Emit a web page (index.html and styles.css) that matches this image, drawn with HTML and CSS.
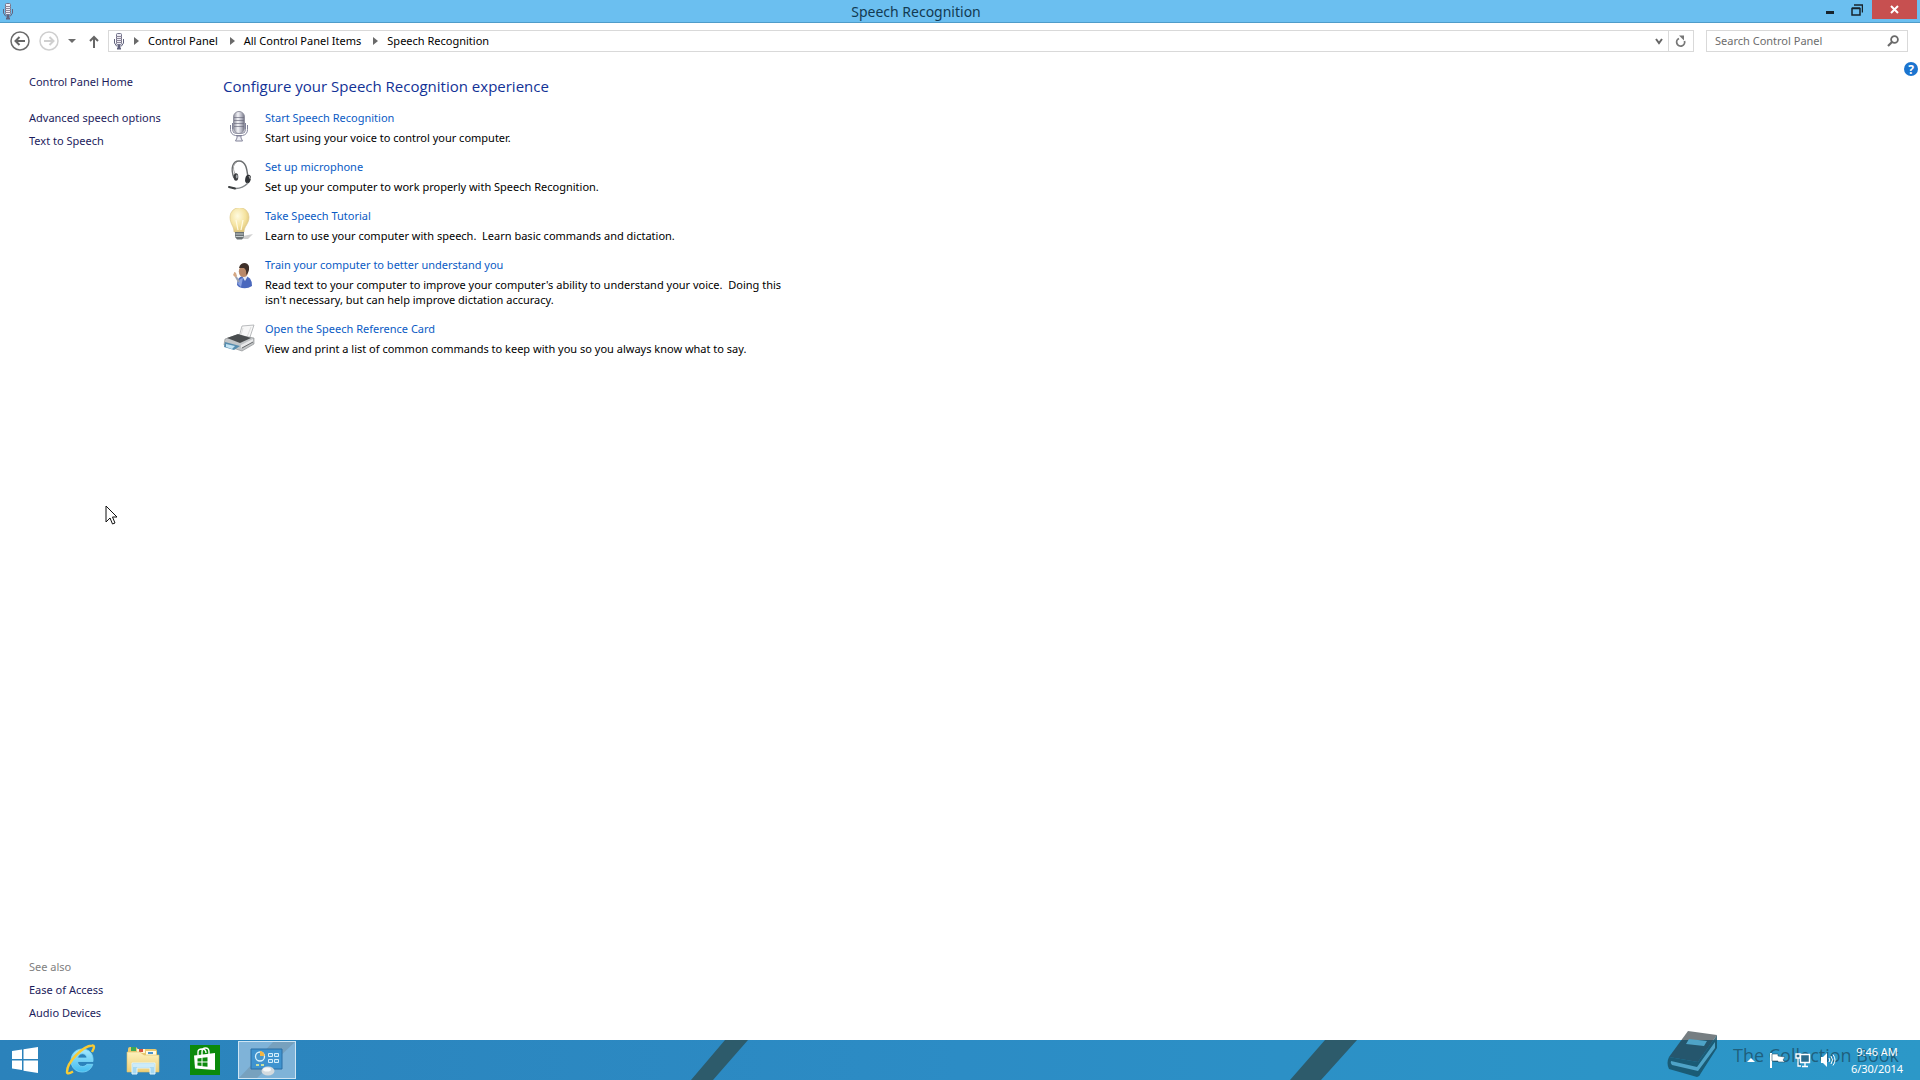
FILE: index.html
```html
<!DOCTYPE html>
<html lang="en">
<head>
<meta charset="utf-8">
<title>Speech Recognition</title>
<link rel="stylesheet" href="styles.css">
</head>
<body>
<svg class="defs" aria-hidden="true">
  <defs>
    <linearGradient id="metal" x1="0" x2="1"><stop offset="0" stop-color="#8b8c9a"/><stop offset=".4" stop-color="#f4f4f8"/><stop offset=".7" stop-color="#b9bac6"/><stop offset="1" stop-color="#6f7080"/></linearGradient>
    <radialGradient id="glass" cx=".4" cy=".35" r=".7"><stop offset="0" stop-color="#fffbe0"/><stop offset=".6" stop-color="#f5e3a0"/><stop offset="1" stop-color="#dcc074"/></radialGradient>
    <linearGradient id="sky" x1="0" y1="0" x2="0" y2="1"><stop offset="0" stop-color="#a5e8fd"/><stop offset="1" stop-color="#43bdf0"/></linearGradient>
    <linearGradient id="manila" x1="0" y1="0" x2="0" y2="1"><stop offset="0" stop-color="#fdf1bd"/><stop offset="1" stop-color="#edcf77"/></linearGradient>
    <symbol id="mic" viewBox="0 0 32 32">
      <path d="M7.500 15v4.500q0 5 5 6h7q5-1 5-6V15M9.500 13v6.500q0 4 4 4h5q4 0 4-4V13" fill="none" stroke="#83849a"/>
      <path d="M14 26h4v2l1.500 3h-7L14 28z" fill="#eeeef4" stroke="#83849a"/>
      <rect x="10.500" y="1.500" width="11" height="22" rx="5.500" fill="url(#metal)" stroke="#9192a0"/>
      <path d="M11 10.500h10M11 13.500h10M11 16.500h10M11 7.500h10" stroke="#6d6e80" stroke-opacity=".7"/>
    </symbol>
    <symbol id="mic-small" viewBox="0 0 16 18">
      <path d="M3.500 7v4l2 3h5l2-3V7" fill="none" stroke="#62637e"/>
      <rect x="5.500" y="1.500" width="5" height="11" rx="1" fill="#eeedf5" stroke="#73748c"/>
      <path d="M5 4.500h6M5 6.500h6M5 8.500h6M5 10.500h6" stroke="#8d8799"/>
      <path d="M8 13v3M6 16.500h4" stroke="#62637e" stroke-width="2"/>
    </symbol>
    <symbol id="chevron" viewBox="0 0 5 8"><path d="M0 0l5 4-5 4z" fill="#6a6a6a"/></symbol>
  </defs>
</svg>

<header class="titlebar">
  <svg class="title-icon" width="16" height="18"><use href="#mic-small"/></svg>
  <h1 class="title">Speech Recognition</h1>
  <div class="window-buttons">
    <button class="win-btn" aria-label="Minimize"><svg width="8" height="12"><path d="M0 7h8v3H0z" fill="#17242d"/></svg></button>
    <button class="win-btn" aria-label="Restore"><svg width="12" height="12"><path d="M1 4.500h8v6.500H1zM1 4h8" fill="none" stroke="#17242d" stroke-width="1.500"/><path d="M3 1h8.500v7.500" fill="none" stroke="#17242d" stroke-width="1.500"/></svg></button>
    <button class="win-btn close" aria-label="Close"><svg width="9" height="9"><path d="M1 1l7 7M8 1L1 8" stroke="#fff" stroke-width="2"/></svg></button>
  </div>
</header>

<nav class="navbar" aria-label="Navigation">
  <button class="nav-btn" aria-label="Back"><svg width="20" height="20"><circle cx="10" cy="10" r="9" fill="none" stroke="#6c6c6c" stroke-width="1.500"/><path d="M15 10H6M9.500 6L5.500 10l4 4" fill="none" stroke="#666" stroke-width="2"/></svg></button>
  <button class="nav-btn" aria-label="Forward"><svg width="20" height="20"><circle cx="10" cy="10" r="9" fill="none" stroke="#cfcfcf" stroke-width="1.500"/><path d="M5 10h9M10.500 6l4 4-4 4" fill="none" stroke="#cfcfcf" stroke-width="2"/></svg></button>
  <button class="nav-btn recent" aria-label="Recent locations"><svg width="8" height="4"><path d="M0 0h8L4 4z" fill="#6c6c6c"/></svg></button>
  <button class="nav-btn" aria-label="Up"><svg width="10" height="13"><path d="M5 13V2M1 6l4-4 4 4" fill="none" stroke="#666" stroke-width="2"/></svg></button>
  <div class="address">
    <svg width="16" height="18"><use href="#mic-small"/></svg>
    <ol class="crumbs">
      <li><svg width="5" height="8"><use href="#chevron"/></svg><a href="#">Control Panel</a></li>
      <li><svg width="5" height="8"><use href="#chevron"/></svg><a href="#">All Control Panel Items</a></li>
      <li><svg width="5" height="8"><use href="#chevron"/></svg><a href="#">Speech Recognition</a></li>
    </ol>
    <button class="address-btn" aria-label="Previous locations"><svg width="8" height="7"><path d="M1 1l3 4 3-4" fill="none" stroke="#666" stroke-width="2"/></svg></button>
    <button class="address-btn refresh" aria-label="Refresh"><svg width="12" height="13"><path d="M4 3.500A4 4 0 1 0 9.500 6" fill="none" stroke="#777" stroke-width="1.800"/><path d="M4 0.500h5v5z" fill="#777"/></svg></button>
  </div>
  <form class="search">
    <input class="search-input" type="text" aria-label="Search Control Panel" placeholder="Search Control Panel">
    <button class="search-btn" type="button" aria-label="Search"><svg width="12" height="12"><circle cx="7.500" cy="4.500" r="3.400" fill="none" stroke="#6a6a6a" stroke-width="1.800"/><path d="M5 7L1 11" stroke="#6a6a6a" stroke-width="2.200"/></svg></button>
  </form>
</nav>

<div class="content">
  <aside class="sidebar">
    <a class="home" href="#">Control Panel Home</a>
    <a href="#">Advanced speech options</a>
    <a href="#">Text to Speech</a>
    <div class="see-also">
      <span>See also</span>
      <a href="#">Ease of Access</a>
      <a href="#">Audio Devices</a>
    </div>
  </aside>
  <main class="main">
    <h2 class="heading">Configure your Speech Recognition experience</h2>
    <ul class="tasks">
      <li class="task">
        <svg width="32" height="32"><use href="#mic"/></svg>
        <div><a href="#">Start Speech Recognition</a><p>Start using your voice to control your computer.</p></div>
      </li>
      <li class="task">
        <svg width="32" height="32" viewBox="0 0 32 32"><path d="M11 19C7 9 10 2 16 2c7 0 8 8 9 17" fill="none" stroke="#6b6e70" stroke-width="1.400"/><path d="M12 15Q8 6 14 3" fill="none" stroke="#aaa"/><ellipse cx="13" cy="18" rx="2.300" ry="3.700" fill="#3b3d40"/><ellipse cx="13.800" cy="17.500" rx="1" ry="2" fill="#a4a8aa"/><ellipse cx="25" cy="20" rx="2.800" ry="4.300" transform="rotate(12 25 20)" fill="#303336"/><path d="M26 17l1.500 3" stroke="#aaa" stroke-width="1.300"/><path d="M25 24Q18 31 9 29" fill="none" stroke="#85898c" stroke-width="1.500"/><path d="M6 28l6 1.500" stroke="#3c3f41" stroke-width="2" stroke-linecap="round"/></svg>
        <div><a href="#">Set up microphone</a><p>Set up your computer to work properly with Speech Recognition.</p></div>
      </li>
      <li class="task">
        <svg width="32" height="32" viewBox="0 0 32 32"><path d="M20 28l10-2-5 5H18z" fill="#aaa" opacity=".55"/><path d="M12 24C12 18 8 16 8 9a9.500 9.500 0 0 1 19 0c0 7-5 9-5 15z" transform="translate(-1 0)" fill="url(#glass)" stroke="#dcc98e" stroke-width=".7"/><path d="M13 12l2 10M20 12l-2 10" stroke="#fffbe5" stroke-width="1.200"/><path d="M12 24h9v5l-2 2.500h-5L12 29z" fill="#6b7275"/><path d="M12.500 26h8M12.500 28.500h8" stroke="#c5cccd"/></svg>
        <div><a href="#">Take Speech Tutorial</a><p>Learn to use your computer with speech.&nbsp; Learn basic commands and dictation.</p></div>
      </li>
      <li class="task">
        <svg width="32" height="32" viewBox="0 -2 32 32"><path d="M14 26q0-9 7-9 8 0 8 10-6 4-13 1z" fill="#4a68bd"/><path d="M15 25q1-6 5-6l-2 9z" fill="#879fe0"/><path d="M19 17l3 5 3-5z" fill="#e5e8f3"/><ellipse cx="20.500" cy="12.500" rx="4.700" ry="5.500" fill="#b98868"/><path d="M16 9q1-5 6-5 5 1 4 7-1 4-3 5 1-5-2-7z" fill="#3e2f29"/><path d="M11 14q0-2 2 0l1 3-1 2-3-3z" fill="#d5a884"/><path d="M13 18l3 5" stroke="#9ca3b1" stroke-width="2"/></svg>
        <div><a href="#">Train your computer to better understand you</a><p>Read text to your computer to improve your computer's ability to understand your voice.&nbsp; Doing this isn't necessary, but can help improve dictation accuracy.</p></div>
      </li>
      <li class="task">
        <svg width="32" height="32" viewBox="0 0 32 32"><path d="M16 16l3-11 12-1-5 15z" fill="#f7f7f7" stroke="#a8abad" stroke-width=".8"/><path d="M20 7l-2 7M28 6l-4 10" stroke="#dedede"/><path d="M2 18l12-4 17 3v6l-12 7L1 24z" fill="#c2c5c7" stroke="#858889" stroke-width=".6"/><path d="M4 17l11-4 13 4-11 5z" fill="#4a4d4f"/><path d="M18 24l12-6v3l-12 6z" fill="#e8e9ea"/><path d="M2 21l15 4-6 4-10-3z" fill="#568cae"/><path d="M3 23l9 2-3 3-6-2z" fill="#c3e3f3"/><path d="M19 27l11-6" stroke="#67696b"/></svg>
        <div><a href="#">Open the Speech Reference Card</a><p>View and print a list of common commands to keep with you so you always know what to say.</p></div>
      </li>
    </ul>
  </main>
  <button class="help" aria-label="Help">?</button>
</div>

<footer class="taskbar">
  <svg class="stripes" viewBox="0 0 1920 40" preserveAspectRatio="none" aria-hidden="true"><path d="M725 0h23l-35 40h-22zM1325 0h32l-36 40h-31z" fill="#2d5b6b"/></svg>
  <button class="app start" aria-label="Start"><svg width="26" height="26" viewBox="0 0 26 26"><path d="M0 4l10-1.500V12H0zM11.500 2.300L26 0v12H11.500zM0 13.500h10V23L0 21.500zM11.500 13.500H26V26l-14.500-2.300z" fill="#fff"/></svg></button>
  <button class="app" aria-label="Internet Explorer"><svg width="32" height="32" viewBox="0 0 32 32"><path d="M28 17.500H12.500c.3 3 2 5 5 5 2 0 3.300-.8 4.300-2.200h6C26.200 25 22.500 28 17.300 28 10.700 28 6 23.500 6 16.800 6 10 10.700 5 17.300 5 24.500 5 28.700 10 28 17.500zM12.700 14h9.200c-.2-2.600-2-4.300-4.500-4.300-2.600 0-4.300 1.700-4.700 4.300z" fill="url(#sky)" stroke="#7bd7f8" stroke-width=".8"/><path d="M27 8q4-7 0-6.500C18 2 2 18 2 28q0 3 6-.5" fill="none" stroke="#f8cb35" stroke-width="2.400"/></svg></button>
  <button class="app" aria-label="File Explorer"><svg width="34" height="32" viewBox="0 0 34 32"><path d="M2 5q0-2 2-2h6l2 2h17q2 0 2 2v20H2z" fill="#e8c96f"/><path d="M5 3h5v4H5z" fill="#3aa856"/><path d="M11 5h8v4h-8z" fill="#fff4d0"/><path d="M13 5h4v3h-4z" fill="#d8523f"/><path d="M20 7h10v4H20z" fill="#fffbe6"/><path d="M22 8h5v2h-5z" fill="#4c94ce"/><path d="M1 8h13l4 3h15v17H1z" fill="url(#manila)" stroke="#dcbf6a" stroke-width=".6"/><path d="M6 19h23v11h-5v-6H11v6H6z" fill="#a6d8f1" stroke="#e0f4fd"/><path d="M7 20h21v3H7z" fill="#cdebf8"/></svg></button>
  <button class="app" aria-label="Store"><svg width="30" height="30" viewBox="0 0 30 30"><path d="M0 0h30v30H0z" fill="#0b8a0b"/><path d="M8 10V7q0-3 4-3t4 4M12 10V7q0-4 3.500-4T19 7v3" fill="none" stroke="#fff" stroke-width="1.400"/><path d="M4 10.500L25 8v17L5 23.500z" fill="#fff"/><path d="M7.500 13.500l4-.5v3.500h-4zM12.500 12.800l5-.6v4.300h-5zM7.500 17.500h4V21l-4-.4zM12.500 17.500h5v4.300l-5-.6z" fill="#0b8a0b"/></svg></button>
  <button class="app active" aria-label="Control Panel"><svg width="56" height="36" viewBox="0 0 56 36"><path d="M34 0h22L18 36H0z" fill="#7295ad" opacity=".6"/><path d="M12 7h31v20H12z" fill="#3f93cf" stroke="#2b6fa5"/><circle cx="21" cy="14.500" r="4.500" fill="#4796cb" stroke="#d9f2fc" stroke-width="1.300"/><path d="M21 14V9a5 5 0 0 1 4.500 5z" fill="#f2b544"/><path d="M29.500 11.500h4v3h-4zM35.500 11.500h4v3h-4zM29.500 17.500h4v3h-4zM35.500 17.500h4v3h-4z" fill="#51a1d6" stroke="#d5eefb"/><path d="M17 22h3v2h-3zM22 22h3v2h-3z" fill="#c9e1a0"/><ellipse cx="29" cy="29" rx="6.500" ry="4.500" fill="#d3dade"/><ellipse cx="28" cy="27.500" rx="4" ry="2" fill="#f6f8f9"/></svg></button>
  <div class="brand">
    <svg width="52" height="48" viewBox="0 0 52 48"><path d="M21 0l29 4-19 27L2 26z" fill="#222e36" fill-opacity=".62"/><path d="M2 26q-3 6 0 12l28 8q3-1 4-4L50 17V4L31 31z" fill="#164a5e" fill-opacity=".78"/><path d="M4 30l26 6 18-25v6L31 40 5 34q-2-2-1-4z" fill="#4ea3c7"/><path d="M22 8l18 2-3 5-18-2z" fill="#4ea3c7"/></svg>
    <span>The Collection Book</span>
  </div>
  <div class="tray">
    <button class="hidden-icons" aria-label="Show hidden icons"><svg width="8" height="4"><path d="M4 0l4 4H0z" fill="#fff"/></svg></button>
    <button aria-label="Action Center"><svg width="17" height="16"><path d="M2 1v15" stroke="#fff" stroke-width="2"/><path d="M3 2h6v2l7 1-2 3 2 2H9V9H3z" fill="#fff" stroke="#28566c" stroke-width=".6"/></svg></button>
    <button aria-label="Network"><svg width="16" height="16"><path d="M5.500 2.500h9v8h-9zM7 14.500h6M10 11v3" fill="#2a6d8e" stroke="#fff" stroke-width="1.400"/><path d="M1 2h4v4H1zM3 6v8h3" fill="#2a6d8e" stroke="#fff" stroke-width="1.300"/></svg></button>
    <button aria-label="Volume"><svg width="16" height="16"><path d="M1 5h2l4-4v14l-4-4H1z" fill="#fff"/><path d="M9 6q1.500 2 0 4M11 4q3 4 0 8M13 2.500q4 5.500 0 11" fill="none" stroke="#fff"/></svg></button>
    <button class="clock"><time>9:46 AM</time><span>6/30/2014</span></button>
  </div>
</footer>

<svg class="pointer" width="13" height="20" aria-hidden="true"><path d="M1 1v16l4-4 2.500 6 2.500-1-2.500-6H12z" fill="#fff" stroke="#111"/></svg>
</body>
</html>
```
FILE: styles.css
```css
* { box-sizing: border-box; }

body {
  margin: 0;
  min-height: 100vh;
  display: flex;
  flex-direction: column;
  background: #fff;
  color: #000;
  font: 11px/15px "Noto Sans", "Open Sans", sans-serif;
}

svg { display: block; flex: none; }
h1, h2, p, ol, ul { margin: 0; padding: 0; font-weight: 400; list-style: none; }
a { color: inherit; text-decoration: none; }
a:hover { text-decoration: underline; }
button {
  display: flex;
  align-items: center;
  justify-content: center;
  margin: 0;
  padding: 0;
  border: 0;
  background: none;
  color: inherit;
  font: inherit;
}
.defs { position: absolute; width: 0; height: 0; }

/* Title bar */
.titlebar {
  display: grid;
  grid-template-columns: 16px 1fr 104px;
  height: 23px;
  background: #6bbff0;
  border-bottom: 1px solid #4f9cc9;
}
.title-icon { margin-top: 2px; }
.title {
  color: #123a52;
  font-size: 14px;
  line-height: 23px;
  text-align: center;
}
.window-buttons {
  display: flex;
  justify-content: flex-end;
  height: 19px;
  padding-right: 3px;
}
.win-btn { width: 27px; }
.win-btn.close { width: 45px; margin-left: 2px; background: #c75050; }

/* Navigation row */
.navbar { display: flex; align-items: center; padding: 7px 12px 0 10px; }
.nav-btn { height: 22px; margin-right: 9px; }
.nav-btn.recent { margin: 0 13px 0 0; }
.address {
  flex: 1;
  display: flex;
  align-items: center;
  height: 22px;
  margin-right: 12px;
  padding-left: 2px;
  border: 1px solid #d9d9d9;
}
.crumbs { display: flex; flex: 1; padding-left: 7px; }
.crumbs li { display: flex; align-items: center; gap: 9px; margin-right: 12px; line-height: 14px; }
.address-btn { width: 18px; height: 20px; }
.address-btn.refresh { width: 25px; border-left: 1px solid #d9d9d9; }
.search { display: flex; width: 202px; height: 22px; border: 1px solid #d9d9d9; }
.search-input {
  flex: 1;
  min-width: 0;
  padding: 0 8px 1px;
  border: 0;
  outline: 0;
  background: none;
  font: inherit;
}
.search-input::placeholder { color: #6d6d6d; opacity: 1; }
.search-btn { width: 28px; }

/* Content */
.content { position: relative; flex: 1; display: flex; }
.sidebar {
  display: flex;
  flex-direction: column;
  align-items: flex-start;
  gap: 8px;
  width: 223px;
  padding: 22px 0 20px 29px;
  color: #1c1c5c;
}
.home { margin-bottom: 13px; }
.see-also {
  display: flex;
  flex-direction: column;
  gap: 8px;
  margin-top: auto;
}
.see-also span { color: #808080; }
.main { padding-top: 24px; }
.heading { color: #123296; font: 15px/20px "Open Sans", "Noto Sans", sans-serif; }
.tasks { display: grid; gap: 12px; margin-top: 12px; }
.task { display: flex; gap: 10px; }
.task > svg { margin-top: 2px; }
.task a { display: block; color: #0a5bc4; line-height: 20px; }
.task p { max-width: 532px; margin-top: 2px; }
.help {
  position: absolute;
  top: 10px;
  right: 2px;
  width: 14px;
  height: 14px;
  border-radius: 50%;
  background: #1b74cf;
  color: #fff;
  font-size: 12px;
  font-weight: 700;
}

/* Taskbar */
.taskbar {
  position: relative;
  display: flex;
  height: 40px;
  background: linear-gradient(90deg, #2b82bb, #2c8cc5 50%, #2c98c8);
}
.stripes { position: absolute; inset: 0; width: 100%; height: 100%; }
.app { position: relative; width: 62px; height: 40px; }
.app.start { width: 50px; }
.app.active {
  width: 58px;
  height: 38px;
  margin: 1px 2px;
  border: 1px solid #cfe5f3;
  background: #7fb3d8;
}
.tray {
  position: relative;
  display: flex;
  align-items: center;
  gap: 9px;
  margin-left: auto;
  padding-right: 16px;
  color: #fff;
}
.hidden-icons { margin-right: 5px; }
.clock { flex-direction: column; width: 54px; margin-left: 5px; }
.clock time, .clock span { line-height: 17px; }

/* Watermark behind the tray */
.brand {
  position: absolute;
  right: 21px;
  bottom: 1px;
  display: flex;
  align-items: center;
  gap: 14px;
  color: rgba(24, 64, 82, 0.65);
  font: 18px/24px "Open Sans", "Noto Sans", sans-serif;
  pointer-events: none;
}

.pointer { position: absolute; left: 105px; top: 505px; }
```
